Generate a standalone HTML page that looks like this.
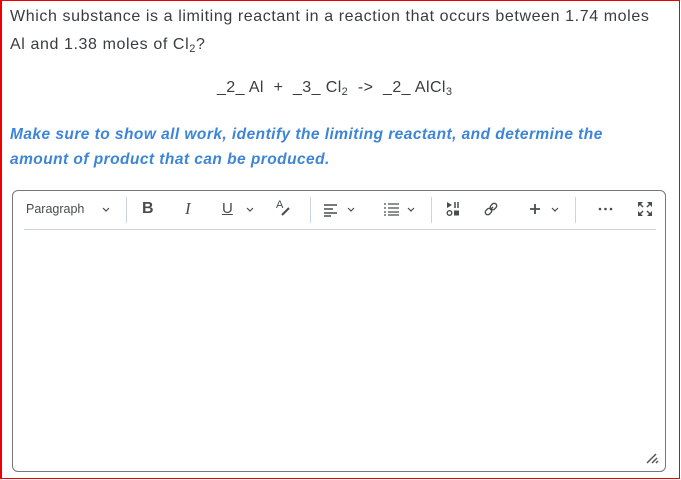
<!DOCTYPE html>
<html><head><style>
*{margin:0;padding:0;box-sizing:border-box}
body{width:681px;height:480px;position:relative;background:#fff;font-family:"Liberation Sans",sans-serif;color:#3a3c3e;overflow:hidden}
.frame{position:absolute;left:0;top:0;width:680px;height:479px;border:1px solid #e00;border-left-width:2px}
.t{position:absolute;left:10px;font-size:16px;letter-spacing:0.6px;white-space:nowrap}
sub{font-size:11px;vertical-align:-3px;line-height:0}
.b{position:absolute;left:10px;font-size:15.5px;color:#3d85d8;font-weight:bold;font-style:italic;letter-spacing:0.45px;white-space:nowrap}
.ed{position:absolute;left:12px;top:190px;width:654px;height:282px;border:1px solid #777;border-radius:6px}
.tb{position:absolute;left:24px;top:229px;width:632px;height:1px;background:#cdd5dc}
.i{position:absolute;top:200px;font-size:14px;color:#494c4e}
.sep{position:absolute;top:197px;width:1px;height:26px;background:#cdd5dc}
</style></head><body>
<div class="frame"></div>
<div class="t" style="top:8px">Which substance is a limiting reactant in a reaction that occurs between 1.74 moles</div>
<div class="t" style="top:36px">Al and 1.38 moles of Cl<sub>2</sub>?</div>
<div class="t" style="top:79px;left:217px;letter-spacing:0.4px">_2_ Al &nbsp;+ &nbsp;_3_ Cl<sub>2</sub> &nbsp;-&gt; &nbsp;_2_ AlCl<sub>3</sub></div>
<div class="b" style="top:126px">Make sure to show all work, identify the limiting reactant, and determine the</div>
<div class="b" style="top:151px">amount of product that can be produced.</div>
<div class="ed"></div>
<div class="tb"></div>
<div class="i" style="left:26px;font-size:12.5px;top:202px">Paragraph</div>
<svg style="position:absolute;left:102px;top:207px" width="8" height="5"><path d="M1 1l3 3 3-3" stroke="#494c4e" fill="none" stroke-width="1.2"/></svg>
<div class="sep" style="left:126px"></div>
<div class="i" style="left:142px;font-weight:bold;font-size:16px;top:200px">B</div>
<div class="i" style="left:185px;font-style:italic;font-family:'Liberation Serif',serif;font-size:17px;top:199px">I</div>
<div class="i" style="left:222px;text-decoration:underline;font-size:15px;top:200px">U</div>
<svg style="position:absolute;left:246px;top:207px" width="8" height="5"><path d="M1 1l3 3 3-3" stroke="#494c4e" fill="none" stroke-width="1.2"/></svg>
<div class="i" style="left:276px;font-size:11px;top:199px">A</div>
<svg style="position:absolute;left:281px;top:206px" width="10" height="10"><path d="M1 9l7-7" stroke="#494c4e" stroke-width="2"/></svg>
<div class="sep" style="left:310px"></div>
<svg style="position:absolute;left:324px;top:203px" width="14" height="14"><path d="M0 2h13M0 6h9M0 10h13M0 13h7" stroke="#494c4e" stroke-width="1.4"/></svg>
<svg style="position:absolute;left:347px;top:207px" width="8" height="5"><path d="M1 1l3 3 3-3" stroke="#494c4e" fill="none" stroke-width="1.2"/></svg>
<svg style="position:absolute;left:384px;top:202px" width="16" height="14"><path d="M0 2h2M4 2h11M0 6h2M4 6h11M0 10h2M4 10h11M0 13h2M4 13h11" stroke="#494c4e" stroke-width="1.3"/></svg>
<svg style="position:absolute;left:407px;top:207px" width="8" height="5"><path d="M1 1l3 3 3-3" stroke="#494c4e" fill="none" stroke-width="1.2"/></svg>
<div class="sep" style="left:431px"></div>
<svg style="position:absolute;left:446px;top:201px" width="14" height="16"><path d="M1 1l5 3-5 3z" fill="#494c4e"/><path d="M9 1v6M12 1v6" stroke="#494c4e" stroke-width="1.5"/><circle cx="3.5" cy="12" r="2.3" stroke="#494c4e" fill="none" stroke-width="1.4"/><rect x="8" y="9.5" width="5" height="5" fill="#494c4e"/></svg>
<svg style="position:absolute;left:484px;top:202px" width="14" height="14"><path d="M6 8l3-3" stroke="#494c4e" stroke-width="1.4"/><rect x="7" y="1" width="5" height="7" rx="2.5" transform="rotate(45 9.5 4.5)" stroke="#494c4e" fill="none" stroke-width="1.4"/><rect x="2" y="6" width="5" height="7" rx="2.5" transform="rotate(45 4.5 9.5)" stroke="#494c4e" fill="none" stroke-width="1.4"/></svg>
<svg style="position:absolute;left:529px;top:203px" width="12" height="12"><path d="M6 1v10M1 6h10" stroke="#494c4e" stroke-width="1.8"/></svg>
<svg style="position:absolute;left:551px;top:207px" width="8" height="5"><path d="M1 1l3 3 3-3" stroke="#494c4e" fill="none" stroke-width="1.2"/></svg>
<div class="sep" style="left:575px"></div>
<svg style="position:absolute;left:598px;top:207px" width="16" height="4"><circle cx="2" cy="2" r="1.3" fill="#494c4e"/><circle cx="7.5" cy="2" r="1.3" fill="#494c4e"/><circle cx="13" cy="2" r="1.3" fill="#494c4e"/></svg>
<svg style="position:absolute;left:637px;top:201px" width="16" height="16"><path d="M1 1h5L1 6zM15 1h-5l5 5zM1 15h5L1 10zM15 15h-5l5-5z" fill="#494c4e"/><path d="M2 2l4 4M14 2l-4 4M2 14l4-4M14 14l-4-4" stroke="#494c4e" stroke-width="1.5"/></svg>
<svg style="position:absolute;left:645px;top:451px" width="16" height="14"><path d="M2 12l9-9M7 12l5-5M11 12l2-2" stroke="#555" stroke-width="1.5"/></svg>
</body></html>
